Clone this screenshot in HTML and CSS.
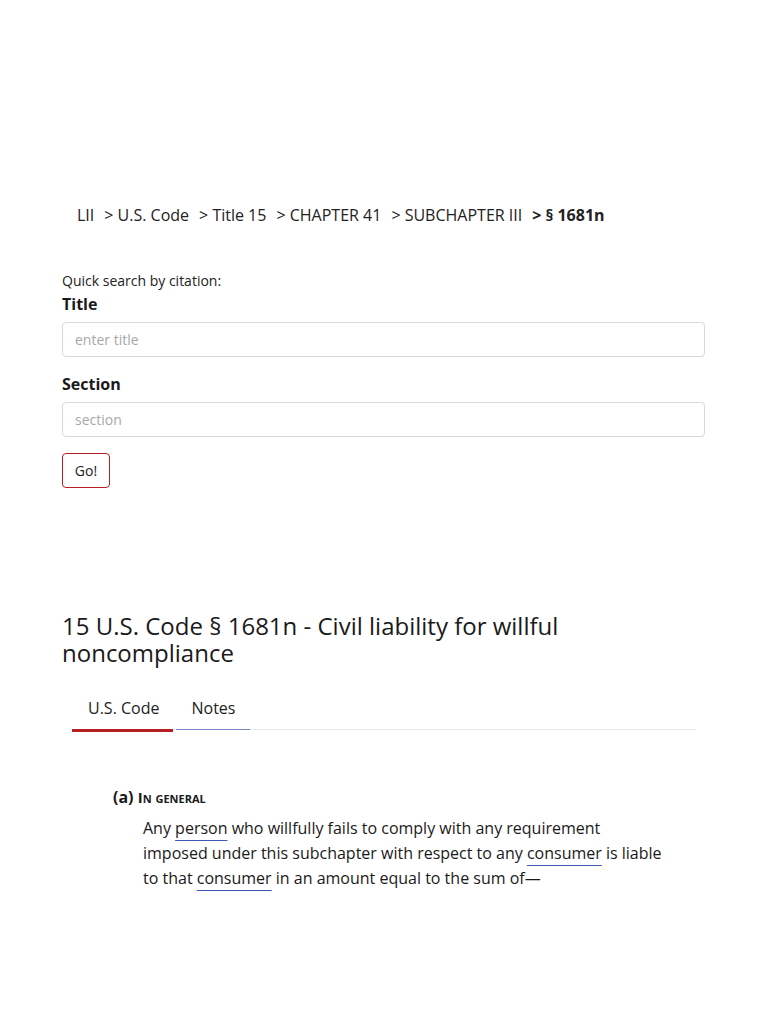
FILE: index.html
```html
<!DOCTYPE html>
<html lang="en">
<head>
<meta charset="utf-8">
<title>15 U.S. Code § 1681n</title>
<link rel="stylesheet" href="styles.css">
</head>
<body>
<div class="page">
  <nav class="crumbs">
    <span class="crumb">LII</span>
    <span class="crumb">&gt; U.S. Code</span>
    <span class="crumb">&gt; Title 15</span>
    <span class="crumb">&gt; CHAPTER 41</span>
    <span class="crumb">&gt; SUBCHAPTER III</span>
    <span class="crumb current">&gt; § 1681n</span>
  </nav>

  <form class="search">
    <div class="search-intro">Quick search by citation:</div>
    <label class="field-label">Title</label>
    <input class="field" type="text" placeholder="enter title">
    <label class="field-label second">Section</label>
    <input class="field" type="text" placeholder="section">
    <button class="go" type="button">Go!</button>
  </form>

  <h1 class="doc-title">15 U.S. Code § 1681n - Civil liability for willful noncompliance</h1>

  <div class="tabs">
    <a class="tab active">U.S. Code</a>
    <a class="tab notes">Notes</a>
  </div>

  <div class="section">
    <div class="sub-head"><span class="num">(a)</span> <span class="sc">In general</span></div>
    <p class="text">Any <span class="def">person</span> who willfully fails to comply with any requirement imposed under this subchapter with respect to any <span class="def">consumer</span> is liable to that <span class="def">consumer</span> in an amount equal to the sum of—</p>
  </div>
</div>
</body>
</html>
```

FILE: styles.css
```css
html, body {
  margin: 0;
  padding: 0;
  background: #fff;
}
body {
  font-family: "Open Sans", "Liberation Sans", sans-serif;
  color: #1a1a1a;
}
.page {
  padding: 203px 63px 0 62px;
}
.crumbs {
  padding-left: 15px;
  font-size: 16px;
  line-height: 24px;
  color: #222;
  display: flex;
  gap: 10px;
}
.crumb.current {
  font-weight: 700;
}
.search {
  margin-top: 44px;
  display: flex;
  flex-direction: column;
  align-items: flex-start;
}
.search-intro {
  font-size: 14px;
  line-height: 20px;
  color: #222;
}
.field-label {
  font-size: 16px;
  font-weight: 700;
  line-height: 24px;
  margin-top: 1px;
  margin-bottom: 6px;
}
.field-label.second {
  margin-top: 15px;
  margin-bottom: 6px;
}
.field {
  box-sizing: border-box;
  width: 100%;
  height: 35px;
  border: 1px solid #d9d9d9;
  border-radius: 4px;
  padding: 0 12px;
  font-family: "Open Sans", "Liberation Sans", sans-serif;
  font-size: 14px;
  color: #333;
  margin: 0;
}
.field::placeholder {
  color: #a8a8a8;
}
.go {
  margin-top: 16px;
  box-sizing: border-box;
  height: 35px;
  width: 48px;
  padding: 0;
  background: #fff;
  border: 1px solid #b51f24;
  border-radius: 4px;
  font-family: "Open Sans", "Liberation Sans", sans-serif;
  font-size: 14px;
  color: #222;
}
.doc-title {
  margin: 124px 0 0 0;
  font-size: 24px;
  font-weight: 400;
  line-height: 27px;
  color: #1a1a1a;
}
.tabs {
  margin: 22px 9px 0 10px;
  display: flex;
  border-bottom: 1px solid #e8e8e8;
}
.tab {
  display: block;
  font-size: 16px;
  line-height: 24px;
  color: #222;
  padding: 8px 16px 9px 16px;
  margin-bottom: -1px;
}
.tab.active {
  border-bottom: 3px solid #b51f24;
  padding-bottom: 7px;
  margin-bottom: -3px;
  padding-left: 16px;
  padding-right: 14px;
}
.tab.notes {
  border-bottom: 1px solid #7585c8;
  margin-left: 3px;
  padding-left: 15px;
  padding-right: 15px;
}
.section {
  margin-top: 57px;
  padding-left: 51px;
}
.sub-head {
  font-size: 16px;
  font-weight: 700;
  line-height: 20px;
}
.sc {
  font-variant: small-caps;
  font-size: 15px;
}
.text {
  margin: 9px 0 0 30px;
  font-size: 16px;
  line-height: 25px;
  color: #1a1a1a;
  padding-right: 42px;
}
.def {
  text-decoration: underline;
  text-decoration-color: #3f58b0;
  text-decoration-thickness: 1px;
  text-underline-offset: 6px;
}
```
